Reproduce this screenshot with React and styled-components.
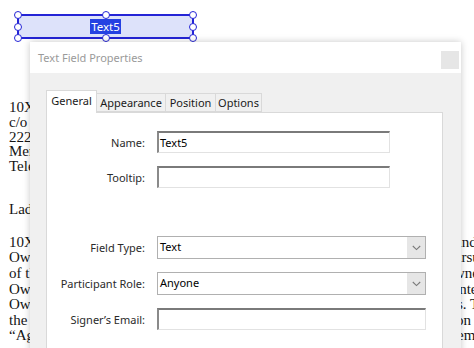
import React from "react";
import styled, { createGlobalStyle } from "styled-components";

const GlobalStyle = createGlobalStyle`
  html, body { margin: 0; padding: 0; background: #fff; }
  body { width: 474px; height: 348px; overflow: hidden; }
`;

const UI_FONT = `"Noto Sans", "Open Sans", sans-serif`;

const Page = styled.div`
  position: relative;
  width: 474px;
  height: 348px;
  overflow: hidden;
  background: #fff;
`;

const Doc = styled.div`
  padding: 100px 0 0 9px;
  font-family: "Liberation Serif", serif;
  font-size: 15px;
  color: #141414;
`;

const DocBlock = styled.div`
  line-height: ${(p) => p.$lh}px;
  margin-top: ${(p) => p.$mt || 0}px;
`;

const DocLine = styled.div`
  display: grid;
  grid-template-columns: ${(p) => p.$split || 446}px auto;
  white-space: nowrap;
`;

const DocLeft = styled.span``;

const DocRight = styled.span``;

const FieldAnnot = styled.div`
  position: absolute;
  left: 17px;
  top: 14px;
  width: 177px;
  height: 25px;
  box-sizing: border-box;
  border: 2px solid #2424d6;
  background: #dde2fa;
  display: flex;
  align-items: center;
  justify-content: center;
`;

const Highlight = styled.span`
  background: #2441e2;
  color: #fff;
  font-family: ${UI_FONT};
  font-size: 11.5px;
  line-height: 15px;
  padding: 0 1px;
`;

const Handle = styled.span`
  position: absolute;
  width: 8px;
  height: 8px;
  box-sizing: border-box;
  border-radius: 50%;
  border: 1.5px solid #2424d6;
  background: #fff;
  left: ${(p) => p.$x};
  top: ${(p) => p.$y};
  transform: translate(-50%, -50%);
`;

const Dialog = styled.div`
  position: absolute;
  left: 30px;
  top: 42px;
  width: 431px;
  height: 330px;
  background: #f0f0f0;
  box-shadow: 0 0 7px rgba(0, 0, 0, 0.22);
  font-family: ${UI_FONT};
  display: flex;
  flex-direction: column;
`;

const TitleBar = styled.div`
  height: 31px;
  flex: none;
  background: #fff;
  display: flex;
  align-items: flex-start;
  justify-content: space-between;
  padding: 0 2px 0 8px;
`;

const Title = styled.div`
  color: #9a9a9a;
  font-size: 11px;
  line-height: 31px;
`;

const CloseBtn = styled.div`
  width: 18px;
  height: 18px;
  margin-top: 9px;
  background: #e6e6e6;
`;

const Body = styled.div`
  flex: 1;
  display: flex;
  flex-direction: column;
  padding: 17px 18px 0 16px;
`;

const TabRow = styled.div`
  display: flex;
  align-items: flex-end;
  height: 22px;
`;

const Tab = styled.div`
  box-sizing: border-box;
  height: ${(p) => (p.$active ? 23 : 19)}px;
  margin-bottom: ${(p) => (p.$active ? -1 : 0)}px;
  display: flex;
  align-items: center;
  justify-content: center;
  width: ${(p) => p.$w}px;
  font-size: 11px;
  color: #1a1a1a;
  background: ${(p) => (p.$active ? "#fff" : "#f0f0f0")};
  border: 1px solid #d9d9d9;
  border-bottom: ${(p) => (p.$active ? "none" : "1px solid #d9d9d9")};
  border-left: ${(p) => (p.$first ? "1px solid #d9d9d9" : "none")};
  position: relative;
  z-index: ${(p) => (p.$active ? 1 : 0)};
  padding-bottom: ${(p) => (p.$active ? 3 : 0)}px;
`;

const Panel = styled.div`
  flex: 1;
  background: #fff;
  border: 1px solid #d9d9d9;
  padding-top: 18px;
  display: flex;
  flex-direction: column;
`;

const Row = styled.div`
  display: grid;
  grid-template-columns: 98px auto;
  column-gap: 12px;
  align-items: center;
  margin-top: ${(p) => p.$mt || 0}px;
`;

const Label = styled.div`
  text-align: right;
  font-size: 11px;
  color: #2a2a2a;
  white-space: nowrap;
`;

const TextInput = styled.div`
  box-sizing: border-box;
  width: ${(p) => p.$w}px;
  height: 22px;
  border-top: 2px solid #7a7a7a;
  border-left: 2px solid #8a8a8a;
  border-right: 1px solid #e2e2e2;
  border-bottom: 1px solid #e2e2e2;
  padding-left: 1px;
  font-size: 11px;
  line-height: 19px;
  color: #000;
`;

const Select = styled.div`
  box-sizing: border-box;
  width: ${(p) => p.$w}px;
  height: 23px;
  border: 1.5px solid #b0b0b0;
  display: flex;
  align-items: stretch;
  background: #fff;
`;

const SelectValue = styled.div`
  flex: 1;
  padding-left: 2px;
  font-size: 11px;
  line-height: 20px;
  color: #000;
`;

const SelectArrow = styled.div`
  width: 18px;
  background: #e6e6e6;
  display: flex;
  align-items: center;
  justify-content: center;
`;

const Chevron = () => (
  <svg width="9" height="6" viewBox="0 0 9 6">
    <polyline points="0.8,1 4.5,4.6 8.2,1" fill="none" stroke="#7a7a7a" strokeWidth="1.1" />
  </svg>
);

const block1 = ["10X", "c/o Th", "2220", "Men", "Tele"];

const block3 = [
  ["10X", "and", 455],
  ["Own", "ursu", 454],
  ["of th", "wne", 454],
  ["Own", "inte", 455],
  ["Own", "rs. T", 452],
  ["the C", "on .", 456],
  ["“Ag", "eme", 457],
];

export default function App() {
  return (
    <>
      <GlobalStyle />
      <Page>
        <Doc>
          <DocBlock $lh={14.8}>
            {block1.map((t) => (
              <DocLine key={t}>
                <DocLeft>{t}</DocLeft>
              </DocLine>
            ))}
          </DocBlock>
          <DocBlock $lh={14.8} $mt={28}>
            <DocLine>
              <DocLeft>Ladi</DocLeft>
            </DocLine>
          </DocBlock>
          <DocBlock $lh={15.6} $mt={18}>
            {block3.map(([l, r, x], i) => (
              <DocLine key={i} $split={x - 9}>
                <DocLeft>{l}</DocLeft>
                <DocRight>{r}</DocRight>
              </DocLine>
            ))}
          </DocBlock>
        </Doc>

        <FieldAnnot>
          <Highlight>Text5</Highlight>
          <Handle $x="-1px" $y="-1px" />
          <Handle $x="50%" $y="-1px" />
          <Handle $x="calc(100% + 1px)" $y="-1px" />
          <Handle $x="-1px" $y="50%" />
          <Handle $x="calc(100% + 1px)" $y="50%" />
          <Handle $x="-1px" $y="calc(100% + 1px)" />
          <Handle $x="50%" $y="calc(100% + 1px)" />
          <Handle $x="calc(100% + 1px)" $y="calc(100% + 1px)" />
        </FieldAnnot>

        <Dialog>
          <TitleBar>
            <Title>Text Field Properties</Title>
            <CloseBtn />
          </TitleBar>
          <Body>
            <TabRow>
              <Tab $active $first $w={51}>General</Tab>
              <Tab $w={69}>Appearance</Tab>
              <Tab $w={50}>Position</Tab>
              <Tab $w={46}>Options</Tab>
            </TabRow>
            <Panel>
              <Row>
                <Label>Name:</Label>
                <TextInput $w={233}>Text5</TextInput>
              </Row>
              <Row $mt={13}>
                <Label>Tooltip:</Label>
                <TextInput $w={233} />
              </Row>
              <Row $mt={48}>
                <Label>Field Type:</Label>
                <Select $w={269}>
                  <SelectValue>Text</SelectValue>
                  <SelectArrow>
                    <Chevron />
                  </SelectArrow>
                </Select>
              </Row>
              <Row $mt={13}>
                <Label>Participant Role:</Label>
                <Select $w={269}>
                  <SelectValue>Anyone</SelectValue>
                  <SelectArrow>
                    <Chevron />
                  </SelectArrow>
                </Select>
              </Row>
              <Row $mt={13}>
                <Label>Signer’s Email:</Label>
                <TextInput $w={269} />
              </Row>
            </Panel>
          </Body>
        </Dialog>
      </Page>
    </>
  );
}
